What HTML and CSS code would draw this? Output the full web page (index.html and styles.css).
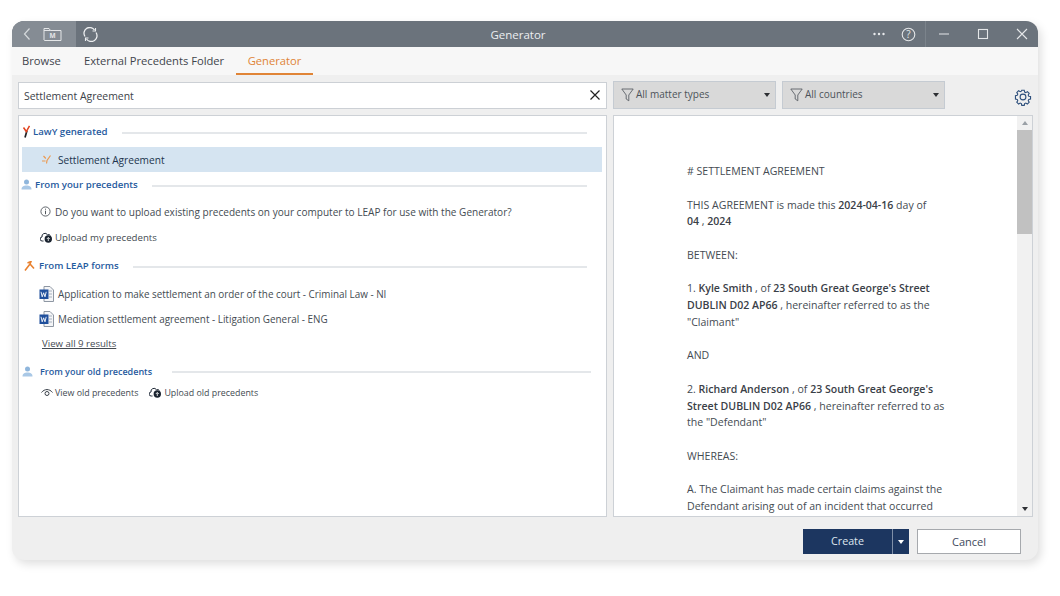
FILE: index.html
```html
<!DOCTYPE html>
<html lang="en">
<head>
<meta charset="utf-8">
<title>Generator</title>
<link rel="stylesheet" href="styles.css">
</head>
<body>
<div class="window">
  <header class="titlebar">
    <div class="nav-left">
      <svg class="ic" width="10" height="14" viewBox="0 0 10 14"><path d="M7.500 1.500 2.500 7l5 5.500" fill="none" stroke="#d5d9dc" stroke-width="1.200"/></svg>
      <svg class="ic" width="19" height="15" viewBox="0 0 19 15"><path d="M1 13V1.500h5l1.500 2H18V13.500H1.500Z" fill="none" stroke="#e4e6e8" stroke-width="1"/><path d="M1 3.500h6.500" stroke="#e4e6e8" stroke-width="1"/><text x="6.500" y="11" class="m">M</text></svg>
    </div>
    <div class="nav-sync">
      <svg width="15" height="15" viewBox="0 0 15 15"><path d="M2 9.500A5.500 5.500 0 0 1 11.500 3M13 5.500A5.500 5.500 0 0 1 3.500 12" fill="none" stroke="#eceef0" stroke-width="1.300"/><path d="M12.500 1v3h-3M2.500 14v-3h3" fill="none" stroke="#eceef0" stroke-width="1.100"/></svg>
    </div>
    <div class="title">Generator</div>
    <div class="win-ctrl">
      <svg class="dots" width="12" height="4" viewBox="0 0 12 4"><circle cx="1.500" cy="2" r="1.200" fill="#e8eaec"/><circle cx="6" cy="2" r="1.200" fill="#e8eaec"/><circle cx="10.500" cy="2" r="1.200" fill="#e8eaec"/></svg>
      <svg class="help" width="15" height="15" viewBox="0 0 15 15"><circle cx="7.500" cy="7.500" r="6.300" fill="none" stroke="#e4e6e8" stroke-width="1.100"/><text x="7.500" y="11" class="q">?</text></svg>
      <span class="sep"></span>
      <svg class="min" width="12" height="12" viewBox="0 0 12 12"><path d="M1 6h10" stroke="#e4e6e8" stroke-width="1"/></svg>
      <svg class="max" width="12" height="12" viewBox="0 0 12 12"><rect x="1.500" y="1.500" width="9" height="9" fill="none" stroke="#e4e6e8" stroke-width="1.100"/></svg>
      <svg class="close" width="14" height="14" viewBox="0 0 14 14"><path d="M2 2l10 10M12 2 2 12" stroke="#e4e6e8" stroke-width="1.100"/></svg>
    </div>
  </header>

  <nav class="tabs">
    <a class="tab">Browse</a>
    <a class="tab">External Precedents Folder</a>
    <a class="tab active">Generator</a>
  </nav>

  <main class="content">
    <div class="filters">
      <div class="search">
        <span>Settlement Agreement</span>
        <svg width="12" height="12" viewBox="0 0 12 12"><path d="M1.500 1.500l9 9M10.500 1.500l-9 9" stroke="#222" stroke-width="1.200"/></svg>
      </div>
      <div class="select">
        <svg width="13" height="14" viewBox="0 0 13 14"><path d="M.8 1h11.400L7.800 7v5.800L5.200 11V7Z" fill="none" stroke="#5b6067" stroke-width=".9"/></svg>
        <span>All matter types</span><i class="caret"></i>
      </div>
      <div class="select">
        <svg width="13" height="14" viewBox="0 0 13 14"><path d="M.8 1h11.400L7.800 7v5.800L5.200 11V7Z" fill="none" stroke="#5b6067" stroke-width=".9"/></svg>
        <span>All countries</span><i class="caret"></i>
      </div>
      <svg class="gear" width="18" height="18" viewBox="0 0 18 18"><path d="M7.600 1.500h2.800l.4 2 1.300.6 1.800-1.100 2 2-1.100 1.800.6 1.300 2 .4v2.800l-2 .4-.6 1.300 1.100 1.800-2 2-1.800-1.100-1.300.6-.4 2H7.600l-.4-2-1.300-.6-1.800 1.100-2-2 1.100-1.800-.6-1.300-2-.4V7.500l2-.4.6-1.300L2.100 4l2-2 1.800 1.100 1.300-.6Z" transform="translate(.9 .9) scale(.9)" fill="none" stroke="#2d4f7c" stroke-width="1.200"/><circle cx="9" cy="9" r="2.900" fill="none" stroke="#2d4f7c" stroke-width="1.100"/></svg>
    </div>

    <div class="panels">
      <section class="panel-left">
        <div class="head h-lawy">
          <svg width="9" height="13" viewBox="0 0 9 13"><path d="M3 12.500 5 5.500" fill="none" stroke="#1f2226" stroke-width="1.700"/><path d="M1.500 2.500 4.300 6.500 7.500.8" fill="none" stroke="#e2431f" stroke-width="1.500"/></svg>
          <b>LawY generated</b><hr>
        </div>
        <div class="row selected">
          <svg width="11" height="11" viewBox="0 0 11 11"><path d="M2.500 2l2.300 2.500M9.500 1.500 6 6.500l-.5 3M1 7h3.500" fill="none" stroke="#ec9a52" stroke-width="1.200"/></svg>
          <span>Settlement Agreement</span>
        </div>
        <div class="head h-yours">
          <svg width="11" height="11" viewBox="0 0 11 11"><circle cx="5.500" cy="3" r="2.500" fill="#8fb6dc"/><path d="M.5 10.500c0-3 2-4 5-4s5 1 5 4Z" fill="#a9c8e6"/></svg>
          <b>From your precedents</b><hr>
        </div>
        <div class="row info">
          <svg width="11" height="11" viewBox="0 0 11 11"><circle cx="5.500" cy="5.500" r="4.600" fill="none" stroke="#50565c" stroke-width=".9"/><path d="M5.500 4.700v3.500M5.500 2.700v1" stroke="#50565c" stroke-width="1"/></svg>
          <span>Do you want to upload existing precedents on your computer to LEAP for use with the Generator?</span>
        </div>
        <div class="row upload">
          <svg width="13" height="11" viewBox="0 0 13 11"><path d="M3.500 9H2.300A2 2 0 0 1 2 5a3 3 0 0 1 5.500-2.200 2.300 2.300 0 0 1 3 1" fill="none" stroke="#1f2937" stroke-width="1"/><circle cx="8.300" cy="7" r="3.700" fill="#1b2430"/><path d="M8.300 9V5.500M6.800 7l1.500-1.500L9.800 7" fill="none" stroke="#fff" stroke-width=".8"/></svg>
          <span>Upload my precedents</span>
        </div>
        <div class="head h-leap">
          <svg width="11" height="10" viewBox="0 0 11 10"><path d="M1 9.500 6 3l4 4.500M6 3l1-2.500L3.500 2" fill="none" stroke="#e9812f" stroke-width="1.600"/></svg>
          <b>From LEAP forms</b><hr>
        </div>
        <div class="row doc">
          <svg width="15" height="16" viewBox="0 0 15 16"><use href="#word"/></svg>
          <span>Application to make settlement an order of the court - Criminal Law - NI</span>
        </div>
        <div class="row doc">
          <svg width="15" height="16" viewBox="0 0 15 16"><use href="#word"/></svg>
          <span>Mediation settlement agreement - Litigation General - ENG</span>
        </div>
        <div class="row viewall"><a>View all 9 results</a></div>
        <div class="head h-old">
          <svg width="11" height="11" viewBox="0 0 11 11"><circle cx="5.500" cy="3" r="2.500" fill="#8fb6dc"/><path d="M.5 10.500c0-3 2-4 5-4s5 1 5 4Z" fill="#a9c8e6"/></svg>
          <b>From your old precedents</b><hr>
        </div>
        <div class="row links">
          <span class="lnk"><svg width="12" height="9" viewBox="0 0 12 9"><path d="M.5 4.500C3.500 .6 8.500 .6 11.500 4.500" fill="none" stroke="#3a414a" stroke-width="1"/><circle cx="6" cy="5.500" r="2" fill="none" stroke="#3a414a" stroke-width="1"/></svg>View old precedents</span>
          <span class="lnk"><svg width="13" height="11" viewBox="0 0 13 11"><path d="M3.500 9H2.300A2 2 0 0 1 2 5a3 3 0 0 1 5.500-2.200 2.300 2.300 0 0 1 3 1" fill="none" stroke="#1f2937" stroke-width="1"/><circle cx="8.300" cy="7" r="3.700" fill="#1b2430"/><path d="M8.300 9V5.500M6.800 7l1.500-1.500L9.800 7" fill="none" stroke="#fff" stroke-width=".8"/></svg>Upload old precedents</span>
        </div>
      </section>

      <section class="panel-right">
        <article class="doc-text">
          <p># SETTLEMENT AGREEMENT</p>
          <p>THIS AGREEMENT is made this <b>2024-04-16</b> day of<br><b>04</b> , <b>2024</b></p>
          <p>BETWEEN:</p>
          <p>1. <b>Kyle Smith</b> , of <b>23 South Great George's Street<br>DUBLIN D02 AP66</b> , hereinafter referred to as the<br>"Claimant"</p>
          <p>AND</p>
          <p>2. <b>Richard Anderson</b> , of <b>23 South Great George's<br>Street DUBLIN D02 AP66</b> , hereinafter referred to as<br>the "Defendant"</p>
          <p>WHEREAS:</p>
          <p>A. The Claimant has made certain claims against the<br>Defendant arising out of an incident that occurred</p>
        </article>
        <div class="scrollbar">
          <i class="arrow up"></i>
          <div class="track"><div class="thumb"></div></div>
          <i class="arrow down"></i>
        </div>
      </section>
    </div>

    <footer class="actions">
      <div class="create"><span>Create</span><i class="split"><i class="caret white"></i></i></div>
      <div class="cancel">Cancel</div>
    </footer>
  </main>
</div>
<svg class="defs" width="0" height="0">
  <symbol id="word" viewBox="0 0 15 16">
    <path d="M5 .5h6l3.500 3.500v11.500H5Z" fill="#f4f5f7" stroke="#8e97a3"/>
    <path d="M10 5h3M10 8h3M10 11h3" stroke="#a6b0bd"/>
    <rect x=".5" y="3.500" width="9" height="9.500" fill="#1f4f9c"/>
    <path d="M2 5.800l1.200 5 1.400-4 1.400 4 1.200-5" fill="none" stroke="#fff" stroke-width=".9"/>
  </symbol>
</svg>
</body>
</html>
```

FILE: styles.css
```css
* { box-sizing: border-box; }
html, body { margin: 0; padding: 0; background: #fff; overflow: hidden; }
body { width: 1060px; height: 596px; padding: 21px 22px 0 12px; font-family: "Open Sans", "Noto Sans", sans-serif; font-size: 10px; color: #444b52; }
.defs { position: absolute; }

.window { width: 1026px; height: 539px; border-radius: 12px; background: #efefef; box-shadow: 3px 4px 10px rgba(0,0,0,.13); display: flex; flex-direction: column; overflow: hidden; }

.titlebar { height: 26px; flex: none; background: #6b737c; display: flex; align-items: center; color: #eceef0; }
.nav-left { width: 64px; height: 100%; background: #858c94; display: flex; align-items: center; gap: 11px; padding-left: 10px; }
.m { font: bold 6.500px "Open Sans", sans-serif; fill: #e4e6e8; }
.nav-sync { width: 28px; display: flex; justify-content: center; }
.title { flex: 1; text-align: center; font-size: 11.500px; padding-left: 59px; }
.win-ctrl { display: flex; align-items: center; height: 100%; }
.help { margin-left: 16px; }
.q { font: 10px "Open Sans", sans-serif; fill: #e4e6e8; text-anchor: middle; }
.sep { width: 1px; height: 100%; background: #7b838b; margin-left: 9px; }
.min { margin-left: 12px; }
.max { margin-left: 27px; }
.close { margin-left: 26px; margin-right: 9px; }

.tabs { height: 28px; flex: none; background: #f7f7f7; display: flex; padding-left: 10px; font-size: 11.200px; color: #3f454c; }
.tab { line-height: 27px; height: 28px; }
.tab:nth-child(1) { width: 62px; }
.tab:nth-child(2) { width: 152px; }
.tab.active { width: 77px; text-align: center; color: #e08436; border-bottom: 2px solid #e08436; }

.content { flex: 1; display: flex; flex-direction: column; padding: 6px 5px 0 6px; min-height: 0; }
.filters { display: flex; height: 28px; align-items: center; flex: none; }
.search { width: 589px; height: 27px; background: #fff; border: 1px solid #ccd0d5; display: flex; align-items: center; justify-content: space-between; padding: 0 5px; color: #3c4249; font-size: 10.450px; }
.search span { padding-top: 1px; }
.select { width: 163px; height: 28px; margin-left: 6px; background: #d9d9d9; border: 1px solid #c5cbd2; display: flex; align-items: center; padding: 0 5px 0 7px; color: #4d535a; gap: 2px; }
.select span { flex: 1; line-height: 24px; height: 26px; }
.caret { width: 0; height: 0; border: 3.500px solid transparent; border-top: 4px solid #2d2f33; border-bottom: 0; display: block; }
.caret.white { border-top-color: #fff; }
.gear { margin-left: 69px; margin-top: 4px; }

.panels { flex: none; height: 402px; margin-top: 6px; display: flex; gap: 6px; }
.panel-left { width: 589px; background: #fff; border: 1px solid #cdd1d6; padding: 0 3px; display: flex; flex-direction: column; }
.panel-right { width: 420px; background: #fff; border: 1px solid #cdd1d6; display: flex; overflow: hidden; }

.head { display: flex; align-items: center; color: #1f5a9e; font-size: 9.650px; }
.head b { font-weight: 600; white-space: nowrap; }
.head hr { flex: 1; height: 2px; border: 0; background: #e4e7ea; margin: 2px 0 0 14px; }
.head svg { flex: none; }
.row { display: flex; align-items: center; white-space: nowrap; }
.h-lawy { height: 31px; padding-right: 16px; }
.h-lawy svg { margin: 0 2px 0 0; }
.h-lawy hr { margin-left: 15px; }
.selected { height: 25px; background: #d5e4f1; padding-left: 19px; gap: 6px; color: #22344e; font-weight: 500; font-size: 10.150px; width: 580px; }
.h-yours { height: 25px; margin-left: -1px; padding-right: 16px; gap: 3px; }
.h-yours hr { margin-left: 11px; }
.info { height: 29px; padding-left: 18px; gap: 4px; font-size: 10.050px; }
.upload { height: 23px; padding-left: 18px; gap: 2px; font-size: 9.670px; }
.h-leap { height: 31px; margin: 1px 0 0 2px; padding-right: 16px; gap: 4px; }
.h-leap hr { margin-left: 10px; }
.doc { height: 25px; padding-left: 17px; gap: 4px; font-size: 9.900px; }
.viewall { height: 24px; padding-left: 20px; }
.viewall a { text-decoration: underline; font-size: 9.600px; }
.h-old { height: 32px; padding-right: 12px; gap: 7px; font-size: 9px; }
.h-old hr { margin-left: 13px; }
.links { height: 13px; margin-top: -1px; padding-left: 19px; gap: 11px; font-size: 8.870px; }
.lnk { display: flex; align-items: center; gap: 2px; }

.doc-text { flex: 1; padding: 47px 0 0 73px; line-height: 16.750px; font-size: 10.550px; color: #444b52; white-space: nowrap; overflow: hidden; }
.doc-text p { margin: 0 0 16.750px; }
.doc-text b { font-weight: 600; color: #3a4047; }

.scrollbar { width: 15px; flex: none; background: #f1f1f1; display: flex; flex-direction: column; }
.arrow { height: 14px; flex: none; display: flex; align-items: center; justify-content: center; }
.arrow::after { content: ""; border: 3px solid transparent; }
.up::after { border-bottom: 4px solid #9aa0a6; border-top: 0; }
.down::after { border-top: 4px solid #2f3136; border-bottom: 0; }
.track { flex: 1; }
.thumb { height: 104px; background: #c1c1c1; }

.actions { flex: 1; display: flex; justify-content: flex-end; padding: 12px 12px 0 0; gap: 8px; }
.create { width: 106px; height: 25px; background: #1c3660; color: #dfe6ef; display: flex; font-size: 10.700px; }
.create span { flex: 1; text-align: center; line-height: 25px; }
.split { width: 17px; border-left: 1px solid #7f8fa8; display: flex; align-items: center; justify-content: center; }
.cancel { width: 104px; height: 25px; background: #fff; border: 1px solid #a6a9ad; text-align: center; line-height: 23px; color: #3e4a5c; font-size: 11px; }
```
